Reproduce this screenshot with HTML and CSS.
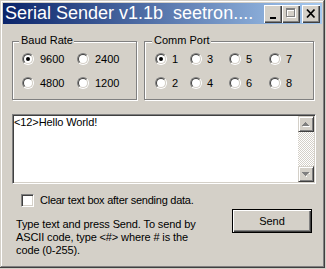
FILE: index.html
```html
<!DOCTYPE html>
<html>
<head>
<meta charset="utf-8">
<link rel="stylesheet" href="styles.css">
</head>
<body>
<div class="window">
  <div class="titlebar">
    <span class="title">Serial Sender v1.1b&nbsp; seetron....</span>
    <div class="tb-buttons">
      <span class="tb-btn"><svg width="18" height="18" shape-rendering="crispEdges"><rect x="6" y="12" width="6" height="2" fill="#000"/></svg></span>
      <span class="tb-btn"><svg width="18" height="18" shape-rendering="crispEdges"><g fill="none" stroke="#fff"><rect x="5.5" y="4.5" width="8" height="8"/></g><rect x="5" y="5" width="8" height="1" fill="#fff"/><g fill="none" stroke="#808080"><rect x="4.5" y="3.5" width="8" height="8"/></g><rect x="4" y="4" width="9" height="1" fill="#808080"/></svg></span>
      <span class="tb-btn close"><svg width="18" height="18"><path d="M5 4.5 L12.5 12.5 M12.5 4.5 L5 12.5" stroke="#000" stroke-width="1.8" fill="none"/></svg></span>
    </div>
  </div>
  <div class="client">
    <div class="groups">
      <div class="group baud">
        <span class="group-label">Baud Rate</span>
        <div class="radio-grid baud-grid">
          <span class="opt"><span class="radio checked"></span>9600</span>
          <span class="opt"><span class="radio"></span>2400</span>
          <span class="opt"><span class="radio"></span>4800</span>
          <span class="opt"><span class="radio"></span>1200</span>
        </div>
      </div>
      <div class="group comm">
        <span class="group-label">Comm Port</span>
        <div class="radio-grid comm-grid">
          <span class="opt"><span class="radio checked"></span>1</span>
          <span class="opt"><span class="radio"></span>3</span>
          <span class="opt"><span class="radio"></span>5</span>
          <span class="opt"><span class="radio"></span>7</span>
          <span class="opt"><span class="radio"></span>2</span>
          <span class="opt"><span class="radio"></span>4</span>
          <span class="opt"><span class="radio"></span>6</span>
          <span class="opt"><span class="radio"></span>8</span>
        </div>
      </div>
    </div>
    <div class="textbox">
      <div class="text-content">&lt;12&gt;Hello World!</div>
      <div class="vscroll">
        <span class="sbtn"><svg width="8" height="5" shape-rendering="crispEdges"><g fill="#808080"><rect x="3" y="0" width="1" height="1"/><rect x="2" y="1" width="3" height="1"/><rect x="1" y="2" width="5" height="1"/><rect x="0" y="3" width="7" height="1"/></g><rect x="1" y="4" width="7" height="1" fill="#fff"/></svg></span>
        <span class="track"></span>
        <span class="sbtn"><svg width="8" height="5" shape-rendering="crispEdges"><g fill="#808080"><rect x="0" y="0" width="7" height="1"/><rect x="1" y="1" width="5" height="1"/><rect x="2" y="2" width="3" height="1"/><rect x="3" y="3" width="1" height="1"/></g><rect x="4" y="4" width="1" height="1" fill="#fff"/><rect x="7" y="1" width="1" height="1" fill="#fff"/></svg></span>
      </div>
    </div>
    <div class="lower">
      <div class="left">
        <span class="check-row"><span class="checkbox"></span>Clear text box after sending data.</span>
        <p class="help">Type text and press Send. To send by<br>ASCII code, type &lt;#&gt; where # is the<br>code (0-255).</p>
      </div>
      <button class="send">Send</button>
    </div>
  </div>
</div>
</body>
</html>
```
FILE: styles.css
```css
* { box-sizing: border-box; }
html, body { margin: 0; }
body {
  background: #d4d0c8;
  font-family: "Liberation Sans", Arial, sans-serif;
  font-size: 11px;
  color: #000;
}
.window {
  width: 325px;
  height: 268px;
  padding: 3px;
  background: #d4d0c8;
  box-shadow: inset -1px -1px #404040, inset 1px 1px #d4d0c8, inset -2px -2px #808080, inset 2px 2px #fff;
  display: flex;
  flex-direction: column;
}
.titlebar {
  height: 21px;
  flex: none;
  background: linear-gradient(to right, #0a246a, #a6caf0);
  display: flex;
  align-items: center;
  padding: 0 2px;
}
.title {
  flex: 1;
  color: #fff;
  font-size: 18px;
  line-height: 21px;
  white-space: nowrap;
  overflow: hidden;
}
.tb-buttons { display: flex; }
.tb-btn {
  width: 18px;
  height: 18px;
  display: block;
  background: #d4d0c8;
  box-shadow: inset 1px 1px #fff, inset -1px -1px #404040, inset -2px -2px #808080;
}
.tb-btn svg { display: block; }
.tb-btn.close { margin-left: 2px; }

.client {
  padding: 17px 0 0 9px;
  display: flex;
  flex-direction: column;
}
.groups { display: flex; gap: 7px; }
.group {
  height: 59px;
  border: 1px solid #808080;
  box-shadow: inset 1px 1px #fff, 1px 1px #fff;
  display: flex;
  flex-direction: column;
  align-items: flex-start;
}
.baud { width: 125px; }
.comm { width: 170px; }
.group-label {
  margin-top: -8px;
  background: #d4d0c8;
  padding: 0 1px 0 2px;
  line-height: 13px;
}
.baud .group-label { margin-left: 6px; }
.comm .group-label { margin-left: 7px; }
.radio-grid {
  display: grid;
  grid-auto-rows: 12px;
  row-gap: 12px;
  margin-top: 6px;
}
.baud-grid { grid-template-columns: 55px 55px; margin-left: 9px; }
.comm-grid { grid-template-columns: 35px 39px 40px 30px; margin-left: 10px; }
.opt {
  display: flex;
  align-items: center;
  gap: 6px;
  line-height: 12px;
  white-space: nowrap;
}
.comm-grid .opt { gap: 5px; }
.radio {
  flex: none;
  width: 12px;
  height: 12px;
  border-radius: 50%;
  border: 1px solid;
  border-color: #808080 #fff #fff #808080;
  position: relative;
}
.radio::before {
  content: "";
  position: absolute;
  inset: 0;
  border-radius: 50%;
  border: 1px solid;
  border-color: #404040 #d4d0c8 #d4d0c8 #404040;
  background: #fff;
}
.radio.checked::after {
  content: "";
  position: absolute;
  left: 3px;
  top: 3px;
  width: 4px;
  height: 4px;
  border-radius: 50%;
  background: #000;
}

.textbox {
  margin-top: 14px;
  width: 304px;
  height: 70px;
  border: 1px solid;
  border-color: #808080 #fff #fff #808080;
  box-shadow: inset 1px 1px #404040, inset -1px -1px #d4d0c8;
  background: #fff;
  padding: 1px;
  display: flex;
}
.text-content { flex: 1; line-height: 13px; letter-spacing: -0.1px; }
.vscroll { width: 16px; display: flex; flex-direction: column; }
.sbtn {
  height: 16px;
  flex: none;
  background: #d4d0c8;
  border: 1px solid;
  border-color: #d4d0c8 #404040 #404040 #d4d0c8;
  box-shadow: inset 1px 1px #fff, inset -1px -1px #808080;
  display: flex;
  align-items: center;
  justify-content: center;
}
.sbtn svg { display: block; }
.track {
  flex: 1;
  background-color: #d4d0c8;
  background-image: repeating-conic-gradient(#fff 0 25%, #d4d0c8 0 50%);
  background-size: 2px 2px;
}

.lower {
  margin-top: 10px;
  width: 300px;
  display: flex;
  justify-content: space-between;
  align-items: flex-start;
}
.left { display: flex; flex-direction: column; }
.check-row {
  display: flex;
  align-items: center;
  gap: 6px;
  margin-left: 9px;
  line-height: 13px;
  white-space: nowrap;
  letter-spacing: -0.25px;
}
.checkbox {
  flex: none;
  width: 13px;
  height: 13px;
  background: #fff;
  border: 1px solid;
  border-color: #808080 #fff #fff #808080;
  box-shadow: inset 1px 1px #404040, inset -1px -1px #d4d0c8;
}
.help {
  margin: 11px 0 0 4px;
  line-height: 13px;
  white-space: nowrap;
  letter-spacing: -0.12px;
}
.send {
  margin-top: 15px;
  width: 80px;
  height: 24px;
  padding: 0;
  font: inherit;
  color: #000;
  background: #d4d0c8;
  border: 1px solid #000;
  box-shadow: inset 1px 1px #fff, inset -1px -1px #404040, inset -2px -2px #808080;
}
```
